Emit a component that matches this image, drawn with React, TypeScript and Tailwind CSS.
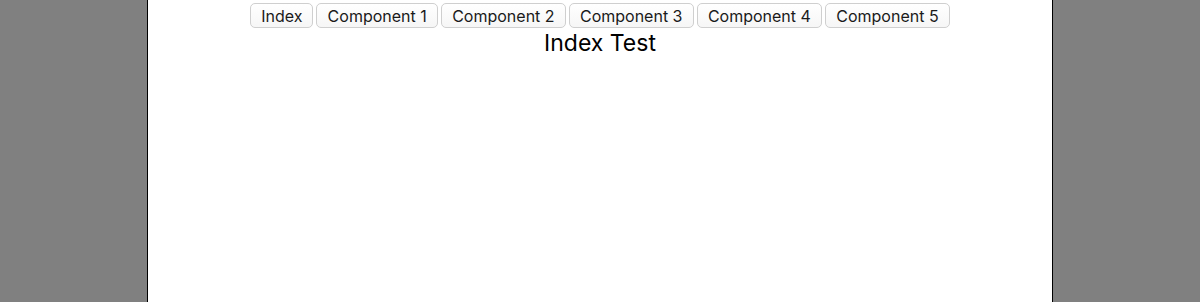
import * as React from 'react'

const tabs = ['Index', 'Component 1', 'Component 2', 'Component 3', 'Component 4', 'Component 5']

export default function App() {
  const [active, setActive] = React.useState('Index')

  return (
    <div className="min-h-[302px] bg-[#808080] flex justify-center font-['Inter','Liberation_Sans',sans-serif]">
      <div className="w-[906px] min-h-[302px] bg-white border-x-[1.5px] border-black flex flex-col items-center">
        <nav className="flex gap-[3px] pt-[3px]">
          {tabs.map((t) => (
            <button
              key={t}
              onClick={() => setActive(t)}
              className="h-[25px] px-[10px] w-auto min-w-0 rounded-[5px] border border-[#cfcfcf] bg-gradient-to-b from-white to-[#f6f6f6] text-[16px] leading-none text-[#1a1a1a] first:px-[10px] [&:not(:first-child)]:px-[10.2px]"
            >
              {t}
            </button>
          ))}
        </nav>
        <h1 className="text-[23px] leading-[30px] text-black">{active} Test</h1>
      </div>
    </div>
  )
}
